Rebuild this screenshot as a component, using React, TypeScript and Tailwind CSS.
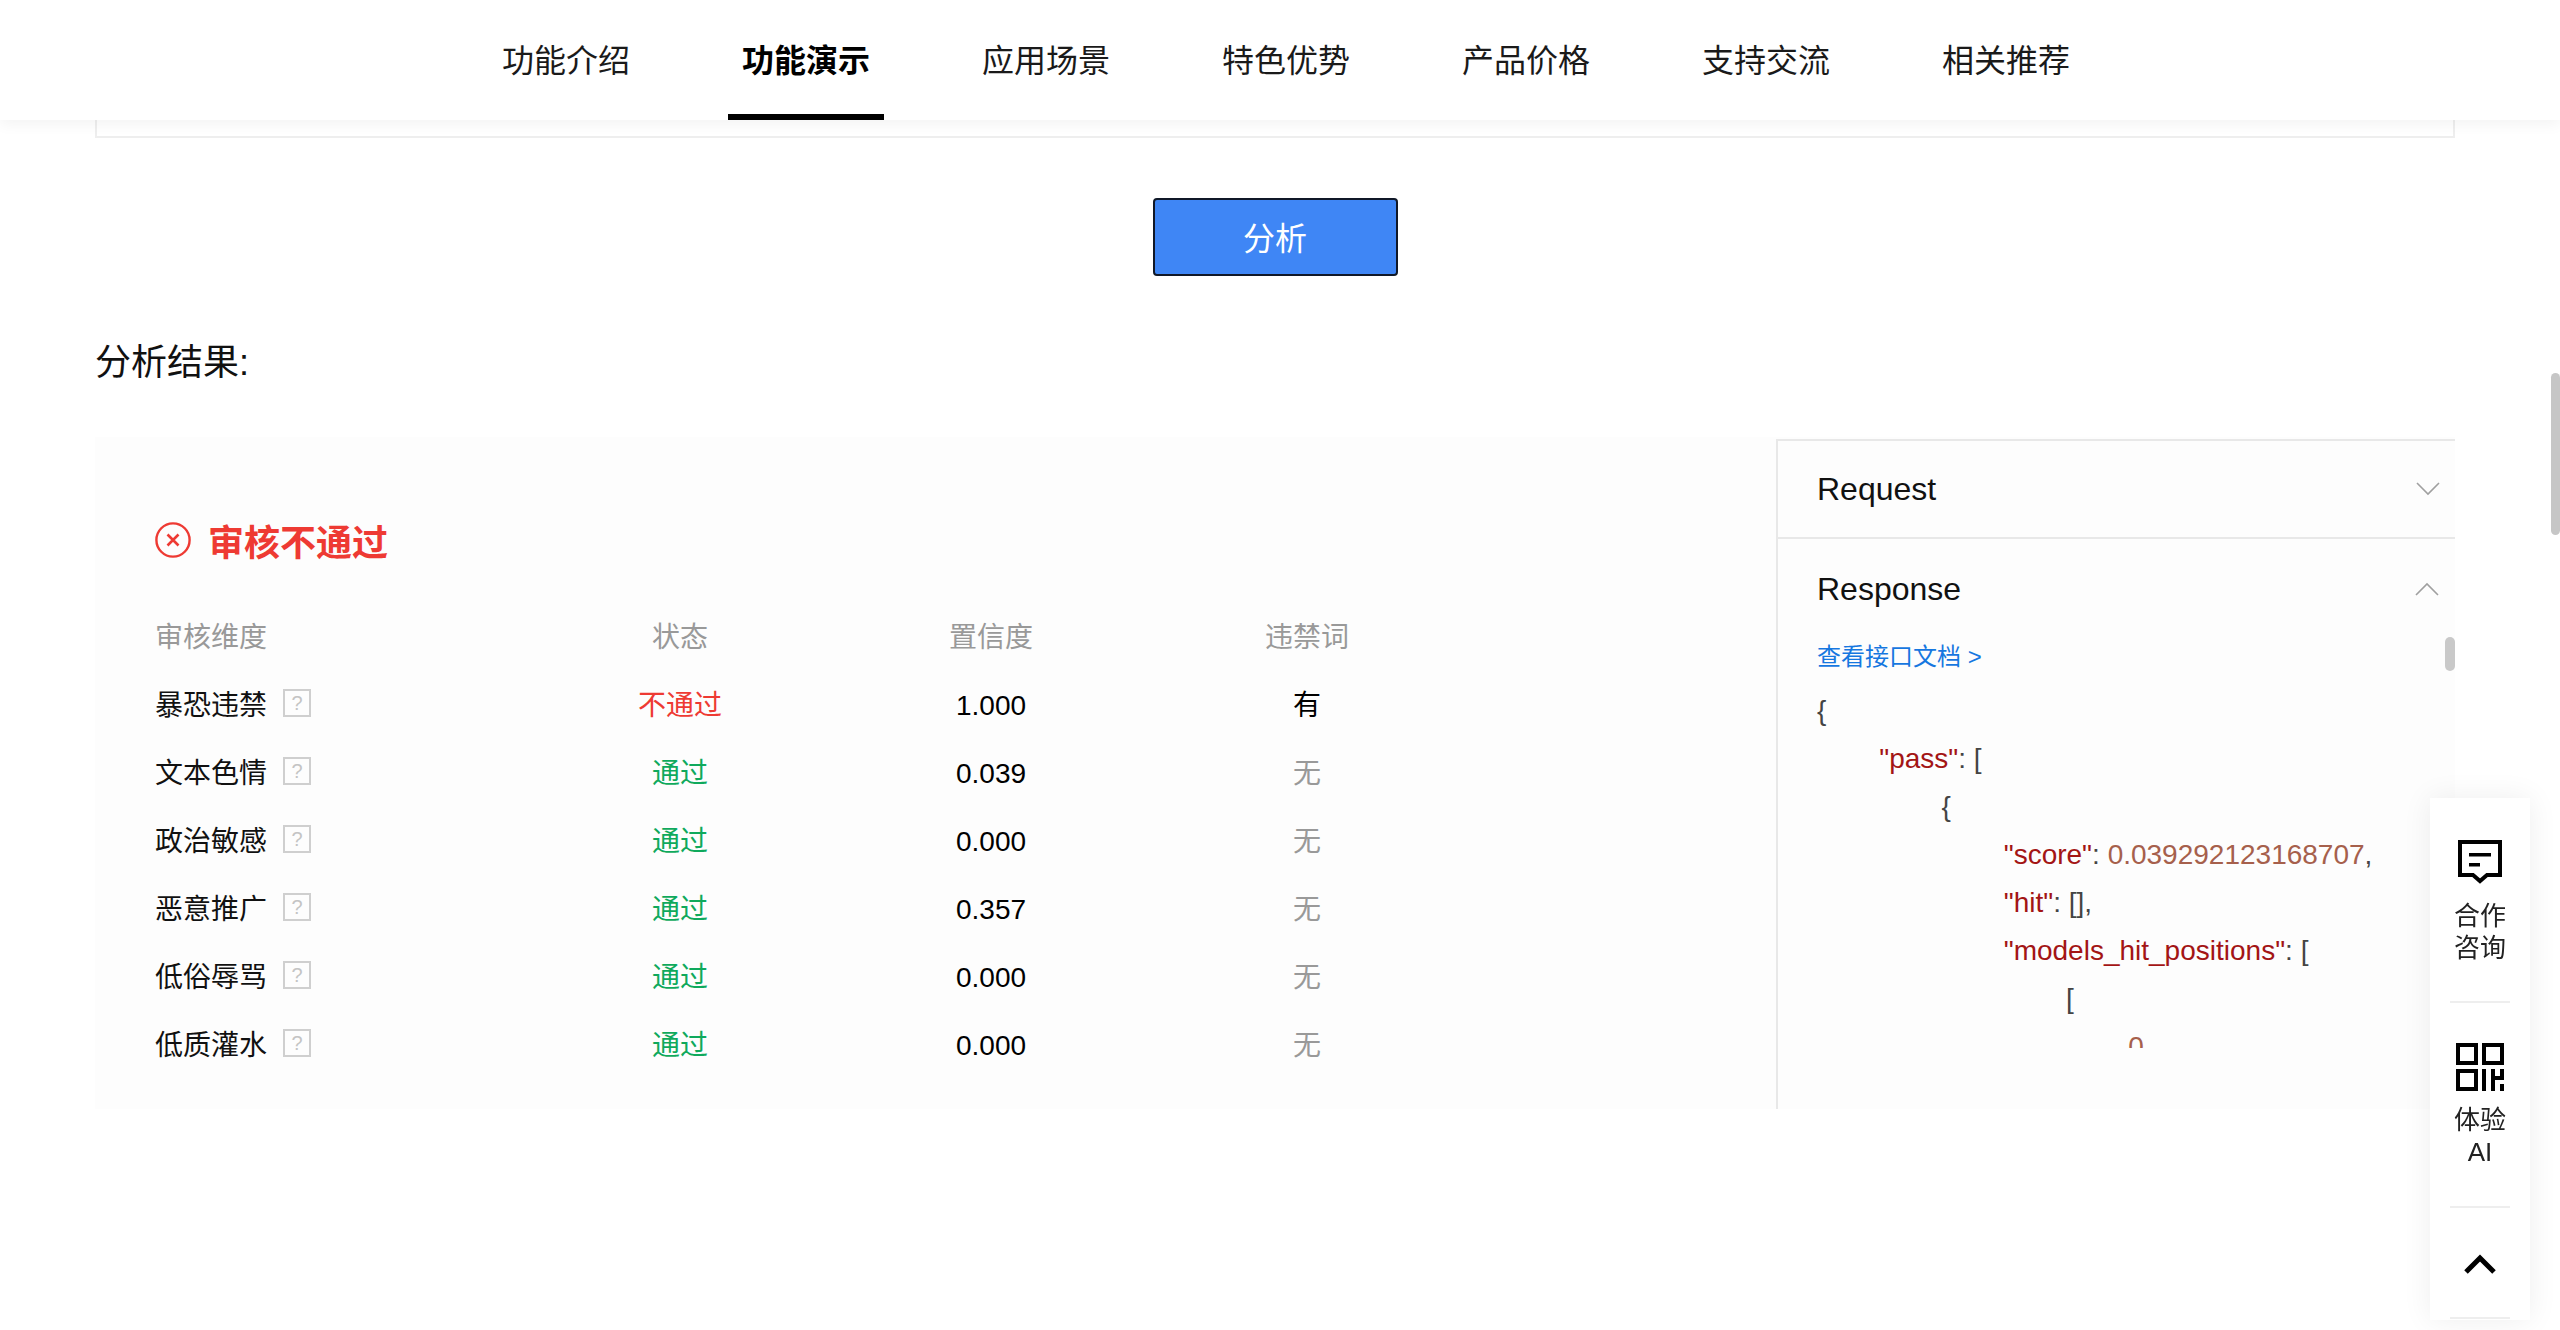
const rows = [
  { name: "暴恐违禁", status: "不通过", score: "1.000", word: "有" },
  { name: "文本色情", status: "通过", score: "0.039", word: "无" },
  { name: "政治敏感", status: "通过", score: "0.000", word: "无" },
  { name: "恶意推广", status: "通过", score: "0.357", word: "无" },
  { name: "低俗辱骂", status: "通过", score: "0.000", word: "无" },
  { name: "低质灌水", status: "通过", score: "0.000", word: "无" },
];

const navItems = ["功能介绍", "功能演示", "应用场景", "特色优势", "产品价格", "支持交流", "相关推荐"];

const FONT = "font-['Liberation_Sans','Noto_Sans_CJK_SC',sans-serif]";

function Key({ children }: { children: string }) {
  return <span className="text-[#a31515]">{children}</span>;
}

function Num({ children }: { children: string }) {
  return <span className="text-[#a6604c]">{children}</span>;
}

function JsonBlock() {
  return (
    <pre className={`${FONT} mt-[7px] whitespace-pre text-[28px] leading-[48px] text-[#444]`}>
      {"{\n"}
      {"        "}<Key>"pass"</Key>{": [\n"}
      {"                {\n"}
      {"                        "}<Key>"score"</Key>{": "}<Num>0.039292123168707</Num>{",\n"}
      {"                        "}<Key>"hit"</Key>{": [],\n"}
      {"                        "}<Key>"models_hit_positions"</Key>{": [\n"}
      {"                                [\n"}
      {"                                        "}<Num>0</Num>{"\n"}
    </pre>
  );
}

function Chevron({ up }: { up?: boolean }) {
  return (
    <svg width="24" height="14" viewBox="0 0 24 14" fill="none" stroke="#a0a0a0" strokeWidth="1.6">
      <path d={up ? "M1 13 L12 2 L23 13" : "M1 1 L12 12 L23 1"} />
    </svg>
  );
}

function ChatIcon() {
  return (
    <svg width="44" height="44" viewBox="0 0 44 44" fill="none">
      <path d="M2 2 H42 V35 H29 L22 41 L15 35 H2 Z" stroke="#000" strokeWidth="4" strokeLinejoin="miter" />
      <rect x="11" y="13" width="22" height="3.5" fill="#000" />
      <rect x="11" y="23" width="11" height="3.5" fill="#000" />
    </svg>
  );
}

function QrIcon() {
  return (
    <svg width="48" height="48" viewBox="0 0 48 48" fill="none">
      <rect x="2" y="2" width="18" height="18" stroke="#000" strokeWidth="4" />
      <rect x="28" y="2" width="18" height="18" stroke="#000" strokeWidth="4" />
      <rect x="2" y="28" width="18" height="18" stroke="#000" strokeWidth="4" />
      <path d="M26 26 H30 V48 H26 Z M35 26 H39 V33 H44 V26 H48 V37 H39 V48 H35 Z M44 41 H48 V48 H44 Z" fill="#000" />
    </svg>
  );
}

function SideCard() {
  return (
    <div className={`${FONT} fixed right-[30px] top-[798px] z-20 flex h-[522px] w-[100px] flex-col items-center bg-white text-center text-[26px] leading-[32px] text-[#222] shadow-[0_0_28px_rgba(0,0,0,0.07)]`}>
      <div className="mt-[42px]">
        <ChatIcon />
      </div>
      <div className="mt-[16px]">合作<br />咨询</div>
      <div className="mt-[37px] h-[2px] w-[60px] bg-[#eeeeee]" />
      <div className="mt-[40px]">
        <QrIcon />
      </div>
      <div className="mt-[13px]">体验<br />AI</div>
      <div className="mt-[38px] h-[2px] w-[60px] bg-[#eeeeee]" />
      <svg className="mt-[46px]" width="32" height="20" viewBox="0 0 32 20" fill="none" stroke="#000" strokeWidth="5">
        <path d="M2 18 L16 4 L30 18" />
      </svg>
      <div className="mt-auto mb-[1px] h-[2px] w-[60px] bg-[#eeeeee]" />
    </div>
  );
}

export default function App() {
  return (
    <div className={`${FONT} relative h-[1330px] w-full overflow-hidden bg-white text-black`}>
      {/* Sticky tab bar */}
      <div className="relative z-10 flex h-[120px] gap-[84px] bg-white pl-[488px] shadow-[0_4px_14px_rgba(0,0,0,0.05)]">
        {navItems.map((item, i) => (
          <div
            key={item}
            className={
              i === 1
                ? "flex h-full items-center border-b-[6px] border-black px-[14px] pt-[8px] text-[32px] font-bold text-black"
                : "flex h-full items-center px-[14px] pt-[2px] text-[32px] text-[#1a1a1a]"
            }
          >
            {item}
          </div>
        ))}
      </div>

      <div className="pl-[95px] pr-[105px]">
        <div className="h-[18px] border-x-2 border-b-2 border-[#eeeeee]" />

        <div className="mt-[60px] flex justify-center">
          <button className="h-[78px] w-[245px] rounded-[4px] border-2 border-[#101828] bg-[#3f86f5] pt-[4px] text-[32px] text-white">
            分析
          </button>
        </div>

        <div className="mt-[65px] text-[36px] leading-[44px] text-[#111]">分析结果:</div>

        <div className="mt-[52px] flex h-[672px] bg-[#fdfdfd]">
          <div className="w-[1681px] pl-[60px] pt-[85px]">
            <div className="flex items-start gap-[17px] text-[36px] font-bold leading-[36px] text-[#ee3a33]">
              <svg width="36" height="36" viewBox="0 0 36 36" fill="none" stroke="#ee3a33" strokeWidth="2.4">
                <circle cx="18" cy="18" r="16.6" />
                <path d="M12.5 12.5 L23.5 23.5 M23.5 12.5 L12.5 23.5" strokeWidth="2.6" />
              </svg>
              <span className="pt-[4px]">审核不通过</span>
            </div>

            <div className="mt-[41px] grid h-[68px] grid-cols-[425px_200px_422px_210px] items-center pt-[2px] text-center text-[28px] text-[#999999]">
              <div className="text-left">审核维度</div>
              <div>状态</div>
              <div>置信度</div>
              <div>违禁词</div>
            </div>

            {rows.map((r) => (
              <div key={r.name} className="grid h-[68px] grid-cols-[425px_200px_422px_210px] items-center pt-[2px] text-center text-[28px]">
                <div className="flex items-center gap-[16px] text-left text-[#111]">
                  {r.name}
                  <span className="-mt-[6px] flex h-[28px] w-[28px] items-center justify-center border-2 border-[#cfcfcf] text-[20px] leading-none text-[#c4c4c4]">?</span>
                </div>
                <div className={r.status === "通过" ? "text-[#0fa95c]" : "text-[#ee3a33]"}>{r.status}</div>
                <div className="text-black">{r.score}</div>
                <div className={r.word === "有" ? "text-black" : "text-[#999999]"}>{r.word}</div>
              </div>
            ))}
          </div>

          <div className="relative mt-[2px] flex-1 border-l-2 border-t-2 border-[#e8e8e8]">
            <div className="flex h-[98px] items-center justify-between border-b-2 border-[#e8e8e8] pl-[39px] pr-[15px] text-[32px] text-[#111]">
              Request
              <Chevron />
            </div>
            <div className="flex h-[100px] items-center justify-between pl-[39px] pr-[16px] text-[32px] text-[#111]">
              Response
              <Chevron up />
            </div>
            <div className="relative -mt-[5px] h-[414px] overflow-hidden pl-[39px]">
              <div className="text-[24px] leading-[46px] text-[#1677e0]">查看接口文档 &gt;</div>
              <JsonBlock />
              <div className="absolute right-0 top-[3px] h-[34px] w-[10px] rounded-[5px] bg-[#c9c9c9]" />
            </div>
          </div>
        </div>
      </div>

      {/* Page scrollbar */}
      <div className="absolute right-0 top-[373px] h-[162px] w-[9px] rounded-[5px] bg-[#c6c6c6]" />

      <SideCard />
    </div>
  );
}
